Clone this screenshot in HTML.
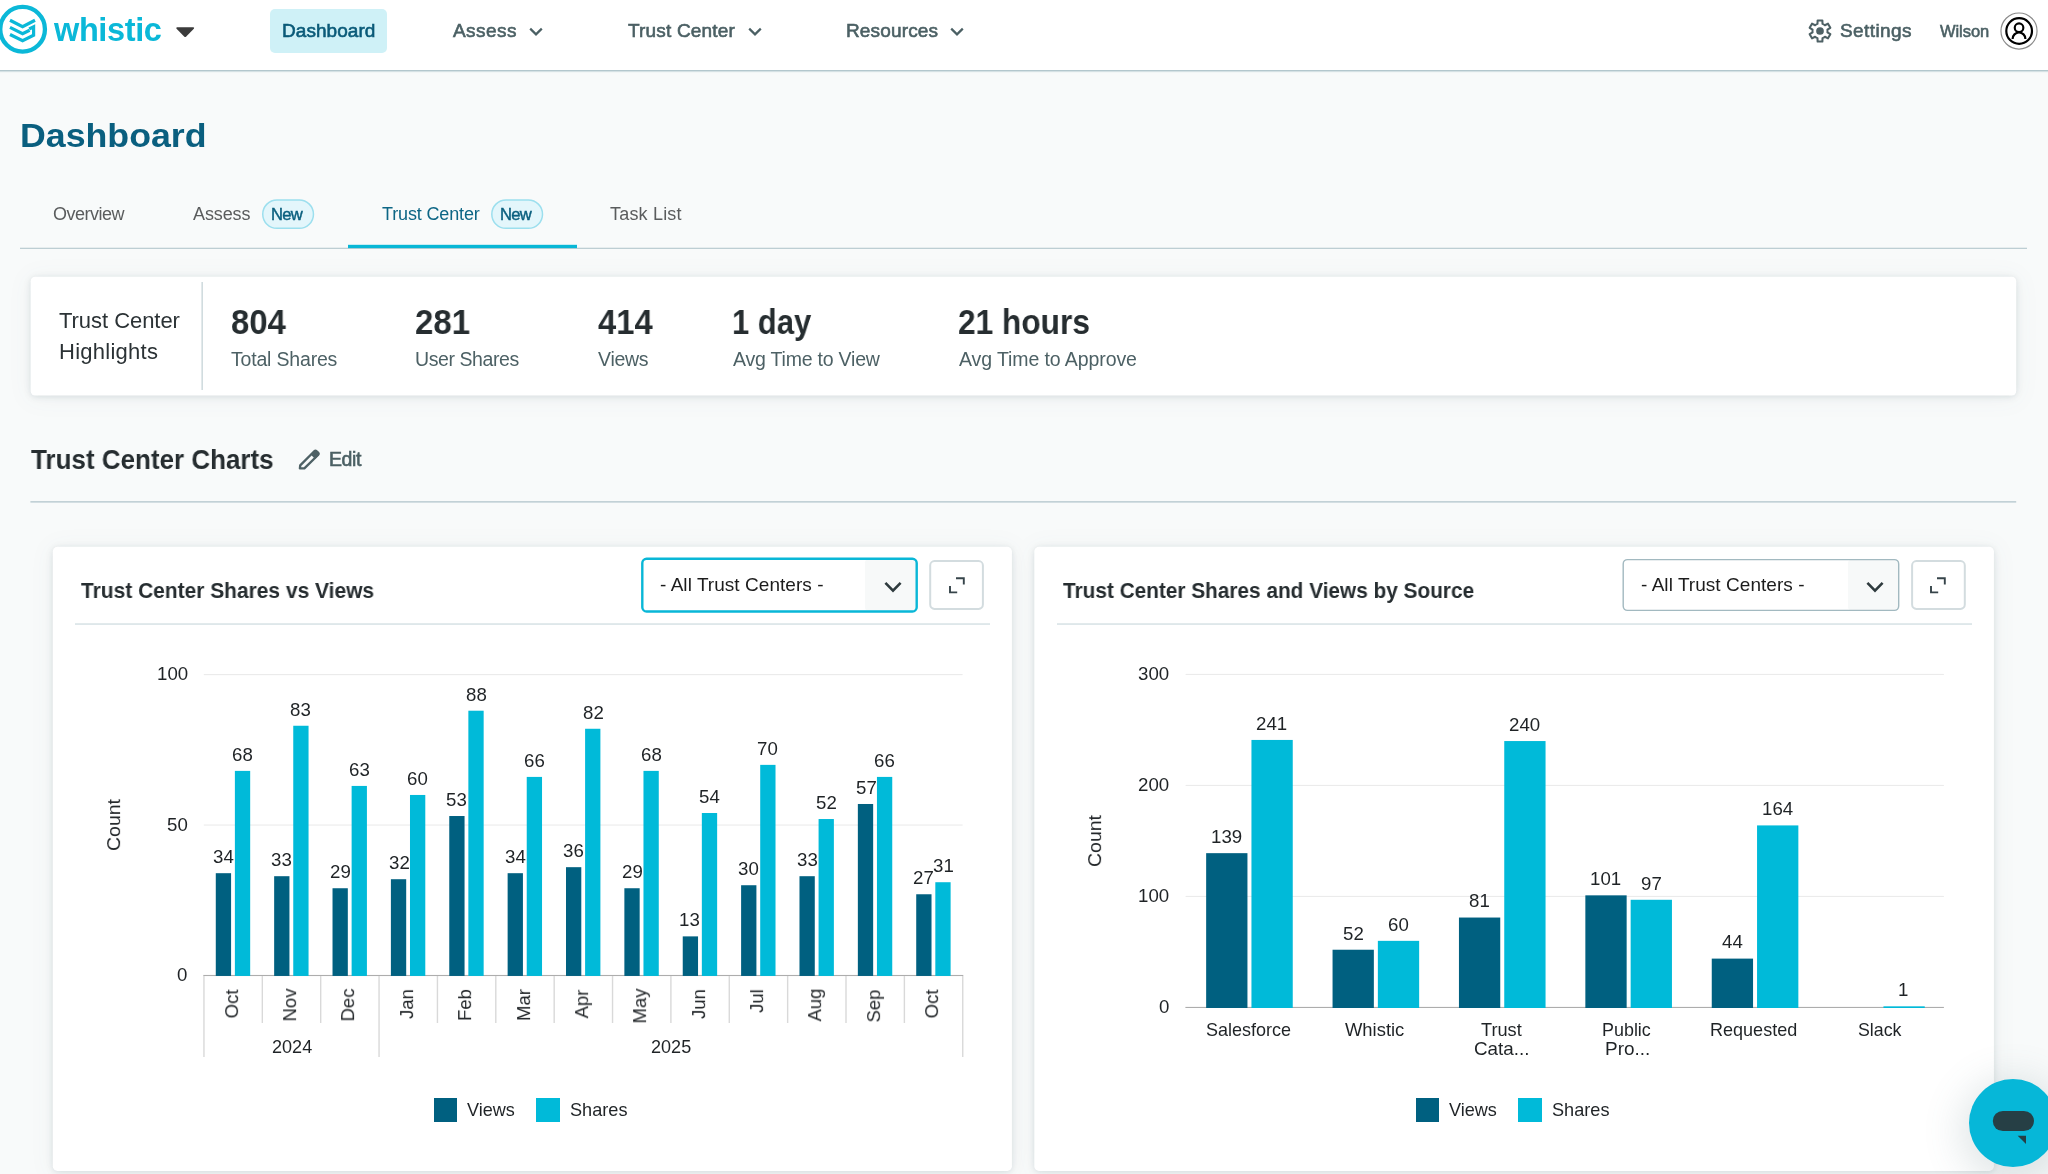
<!DOCTYPE html>
<html lang="en"><head><meta charset="utf-8"><title>Dashboard - Whistic</title>
<style>
*{box-sizing:border-box;margin:0;padding:0}
html,body{width:2048px;height:1174px;overflow:hidden}
body{position:relative;background:#f8fafa;font-family:"Liberation Sans",sans-serif;color:#262d30;
  -webkit-font-smoothing:antialiased}
.t{position:absolute;white-space:nowrap;line-height:1;font-kerning:normal;display:block;will-change:transform}
h1.t,h2.t,h3.t{font-weight:700}
.abs{position:absolute}
svg{position:absolute;overflow:visible}
header{position:absolute;left:0;top:0;width:2048px;height:71px;background:#fff;border-bottom:1px solid #b3c7cd;box-shadow:0 1px 1px rgba(170,195,202,.45)}
.pill{position:absolute;left:270.2px;top:9px;width:116.8px;height:44.2px;border-radius:5px;background:#cff1f7}
.chat{position:absolute;left:1969px;top:1079px;width:88px;height:88px;border-radius:50%;background:#06b7d8;
  box-shadow:0 8px 36px 10px rgba(90,120,125,.17)}
</style></head>
<body>
<header>
<svg width="50" height="58" viewBox="0 0 50 58" style="left:0;top:0">
<circle cx="22.6" cy="29.3" r="22.35" fill="none" stroke="#0bb8d8" stroke-width="4.3"/>
<g fill="none" stroke="#0bb8d8" stroke-width="3.2" stroke-linejoin="miter" stroke-linecap="butt">
<path d="M10 20.3 L22.6 26.6 L35 20.3"/>
<path d="M10 27.4 L22.6 33.7 L29.6 30.2"/>
<path d="M10 34.5 L22.6 40.8 L33.6 35.3 L33.6 26.8 L29.2 29"/>
</g></svg>
<span class="t" style="left:54.40px;top:14.00px;font-size:32.5px;font-weight:700;color:#0bb8d8;letter-spacing:-0.381px">whistic</span>
<svg width="20.8" height="12.5" viewBox="0 0 20 12" style="left:175.4px;top:25.9px"><path d="M2 1.2 H17.6 Q19 1.5 18.1 2.7 L10.6 10.3 Q9.8 10.9 9 10.3 L1.5 2.7 Q0.6 1.5 2 1.2 Z" fill="#3b3b3b"/></svg>
<nav>
<div class="pill"></div>
<a class="t" style="left:281.80px;top:21.00px;font-size:19px;color:#0a5a78;letter-spacing:0.052px;-webkit-text-stroke:0.6px #0a5a78">Dashboard</a>
<a class="t" style="left:453.00px;top:21.00px;font-size:19px;color:#4b6064;letter-spacing:0.452px;-webkit-text-stroke:0.6px #4b6064">Assess</a>
<svg width="16" height="12" viewBox="0 0 16 12" style="left:528px;top:25.5px"><path d="M2.2 2.6 L8 8.4 L13.8 2.6" fill="none" stroke="#4b6064" stroke-width="2.2"/></svg>
<a class="t" style="left:627.50px;top:21.00px;font-size:19px;color:#4b6064;letter-spacing:0.177px;-webkit-text-stroke:0.6px #4b6064">Trust Center</a>
<svg width="16" height="12" viewBox="0 0 16 12" style="left:746.5px;top:25.5px"><path d="M2.2 2.6 L8 8.4 L13.8 2.6" fill="none" stroke="#4b6064" stroke-width="2.2"/></svg>
<a class="t" style="left:845.50px;top:21.00px;font-size:19px;color:#4b6064;letter-spacing:0.148px;-webkit-text-stroke:0.6px #4b6064">Resources</a>
<svg width="16" height="12" viewBox="0 0 16 12" style="left:948.5px;top:25.5px"><path d="M2.2 2.6 L8 8.4 L13.8 2.6" fill="none" stroke="#4b6064" stroke-width="2.2"/></svg>
</nav>
<svg width="24" height="24" viewBox="0 0 24 24" style="left:1808.1px;top:19px"><path d="M9.48 4.88 L9.63 1.41 L14.37 1.41 L14.52 4.88 A7.55 7.55 0 0 1 16.90 6.26 L19.99 4.66 L22.35 8.76 L19.42 10.62 A7.55 7.55 0 0 1 19.42 13.38 L22.35 15.24 L19.99 19.34 L16.90 17.74 A7.55 7.55 0 0 1 14.52 19.12 L14.37 22.59 L9.63 22.59 L9.48 19.12 A7.55 7.55 0 0 1 7.10 17.74 L4.01 19.34 L1.65 15.24 L4.58 13.38 A7.55 7.55 0 0 1 4.58 10.62 L1.65 8.76 L4.01 4.66 L7.10 6.26 A7.55 7.55 0 0 1 9.48 4.88 Z" fill="none" stroke="#4e6165" stroke-width="2.05" stroke-linejoin="round"/><circle cx="12" cy="12" r="3.85" fill="#4e6165"/></svg>
<a class="t" style="left:1839.90px;top:21.00px;font-size:19px;color:#4b6064;letter-spacing:0.421px;-webkit-text-stroke:0.6px #4b6064">Settings</a>
<span class="t" style="left:1940.00px;top:23.00px;font-size:16.5px;color:#4b6064;letter-spacing:-0.066px;-webkit-text-stroke:0.55px #4b6064">Wilson</span>
<svg width="40" height="40" viewBox="0 0 40 40" style="left:1999.1px;top:10.9px">
<circle cx="20" cy="20" r="18.05" fill="#fff" stroke="#8b8b8b" stroke-width="1.15"/>
<circle cx="20.15" cy="20" r="12.85" fill="none" stroke="#000" stroke-width="2.2"/>
<circle cx="20.05" cy="16.7" r="4.3" fill="none" stroke="#000" stroke-width="2.15"/>
<path d="M13.6 27.9 A6.4 6.4 0 0 1 26.4 27.9" fill="none" stroke="#000" stroke-width="2.15"/>
</svg>
</header>
<main>
<svg class="bg" width="2048" height="1174" viewBox="0 0 2048 1174" style="left:0;top:0"><rect x="20" y="247.75" width="2007" height="1.1" fill="#b3c6cc"/><rect x="348" y="244.8" width="229" height="3.3" fill="#08b7d6"/><rect x="262.75" y="199.95" width="50.7" height="28.4" rx="14.2" fill="#e3f6fb" stroke="#9cdfee" stroke-width="1.5"/><rect x="491.81" y="199.95" width="50.7" height="28.4" rx="14.2" fill="#e3f6fb" stroke="#9cdfee" stroke-width="1.5"/><rect x="30.7" y="276.8" width="1985.5" height="118.8" rx="4.5" fill="#fff" style="filter:drop-shadow(0 1px 3px rgba(45,75,85,.14)) drop-shadow(0 2px 11px rgba(45,75,85,.06))"/><rect x="201.5" y="282" width="1.3" height="108" fill="#c6d4d8"/><rect x="30.4" y="501.2" width="1985.8" height="1.35" fill="#b5c8ce"/><rect x="52.8" y="546.8" width="959.1" height="624.2" rx="4.8" fill="#fff" style="filter:drop-shadow(0 1px 3px rgba(45,75,85,.14)) drop-shadow(0 2px 11px rgba(45,75,85,.06))"/><rect x="1034.3" y="546.8" width="959.6" height="624.2" rx="4.8" fill="#fff" style="filter:drop-shadow(0 1px 3px rgba(45,75,85,.14)) drop-shadow(0 2px 11px rgba(45,75,85,.06))"/><rect x="75" y="623.2" width="915" height="1.7" fill="#dbe5e8"/><rect x="1057" y="623.2" width="915" height="1.7" fill="#dbe5e8"/><rect x="865" y="559.5" width="51.5" height="51" rx="3" fill="#f7f9f9"/><rect x="642.3" y="558.8" width="274.4" height="52.7" rx="4.3" fill="none" stroke="#09b7d7" stroke-width="2.4"/><rect x="1848" y="560" width="50.5" height="50" rx="3" fill="#f7f9f9"/><rect x="1623.2" y="559.6" width="275.5" height="50.8" rx="4.3" fill="none" stroke="#a2b9c0" stroke-width="1.4"/><rect x="930.2" y="561.1" width="52.7" height="47.8" rx="4.3" fill="#fff" stroke="#d3dcdf" stroke-width="2"/><rect x="1912.1" y="561.1" width="52.7" height="47.8" rx="4.3" fill="#fff" stroke="#d3dcdf" stroke-width="2"/></svg>
<h1 class="t" style="left:20.07px;top:119.00px;transform:scaleX(1.0664);transform-origin:0 0;font-size:33.5px;font-weight:700;color:#0a5f7f">Dashboard</h1>
<div class="tabs">
<a class="t" style="left:53.00px;top:205.00px;font-size:18px;color:#5a5c5d;letter-spacing:-0.502px">Overview</a>
<a class="t" style="left:193.00px;top:205.00px;font-size:18px;color:#5a5c5d;letter-spacing:-0.103px">Assess</a>
<span class="t" style="left:271.00px;top:207.00px;font-size:16.6px;color:#0a5f7e;letter-spacing:-0.706px;-webkit-text-stroke:0.45px #0a5f7e">New</span>
<a class="t" style="left:381.50px;top:205.00px;font-size:18px;color:#0d6685;letter-spacing:-0.142px">Trust Center</a>
<span class="t" style="left:500.00px;top:207.00px;font-size:16.6px;color:#0a5f7e;letter-spacing:-0.706px;-webkit-text-stroke:0.45px #0a5f7e">New</span>
<a class="t" style="left:610.00px;top:205.00px;font-size:18px;color:#5a5c5d;letter-spacing:0.185px">Task List</a>
</div>
<section class="highlights">
<span class="t" style="left:58.60px;top:310.00px;font-size:22px;color:#2b3235;letter-spacing:-0.047px">Trust Center</span>
<span class="t" style="left:58.50px;top:341.00px;font-size:22px;color:#2b3235;letter-spacing:0.255px">Highlights</span>
<span class="t" style="left:230.95px;top:305.00px;transform:scaleX(0.9502);transform-origin:0 0;font-size:34.6px;font-weight:700;color:#262d30">804</span>
<span class="t" style="left:231.20px;top:350.00px;font-size:19.5px;color:#4d6165;letter-spacing:-0.186px">Total Shares</span>
<span class="t" style="left:415.45px;top:305.00px;transform:scaleX(0.9546);transform-origin:0 0;font-size:34.6px;font-weight:700;color:#262d30">281</span>
<span class="t" style="left:414.70px;top:350.00px;font-size:19.5px;color:#4d6165;letter-spacing:-0.412px">User Shares</span>
<span class="t" style="left:598.40px;top:305.00px;transform:scaleX(0.9476);transform-origin:0 0;font-size:34.6px;font-weight:700;color:#262d30">414</span>
<span class="t" style="left:597.70px;top:350.00px;font-size:19.5px;color:#4d6165;letter-spacing:-0.278px">Views</span>
<span class="t" style="left:732.11px;top:305.00px;transform:scaleX(0.8957);transform-origin:0 0;font-size:34.6px;font-weight:700;color:#262d30">1 day</span>
<span class="t" style="left:733.20px;top:350.00px;font-size:19.5px;color:#4d6165;letter-spacing:-0.200px">Avg Time to View</span>
<span class="t" style="left:958.49px;top:305.00px;transform:scaleX(0.9148);transform-origin:0 0;font-size:34.6px;font-weight:700;color:#262d30">21 hours</span>
<span class="t" style="left:958.70px;top:350.00px;font-size:19.5px;color:#4d6165;letter-spacing:-0.092px">Avg Time to Approve</span>
</section>
<div class="section-head">
<h2 class="t" style="left:30.90px;top:446.00px;transform:scaleX(0.9282);transform-origin:0 0;font-size:28px;font-weight:700;color:#262d30">Trust Center Charts</h2>
<svg width="25.3" height="25.3" viewBox="0 0 24 24" style="left:297.1px;top:446.1px">
<path d="M2.75 21.3 L3.05 18.35 L16.4 5 Q17.5 3.9 18.6 5 L19.95 6.35 Q21.05 7.45 19.95 8.55 L7 21.3 Z" fill="none" stroke="#4e6165" stroke-width="2.2" stroke-linejoin="round"/>
<path d="M13.6 7.8 L16.4 5 Q17.5 3.9 18.6 5 L19.95 6.35 Q21.05 7.45 19.95 8.55 L17.15 11.35 Z" fill="#4e6165" stroke="#4e6165" stroke-width="1.2" stroke-linejoin="round"/>
</svg>
<a class="t" style="left:329.20px;top:450.00px;font-size:19.5px;color:#4b6064;letter-spacing:-0.428px;-webkit-text-stroke:0.6px #4b6064">Edit</a>
</div>
<section class="chart-card">
<h3 class="t" style="left:80.50px;top:580.00px;transform:scaleX(0.9522);transform-origin:0 0;font-size:22px;font-weight:700;color:#262d30">Trust Center Shares vs Views</h3>
<span class="t" style="left:660.00px;top:575.00px;font-size:19px;color:#1c1c1c;letter-spacing:0.047px">- All Trust Centers -</span>
<svg width="20" height="14" viewBox="0 0 20 14" style="left:883.2px;top:580px"><path d="M2.4 2.8 L10 10.6 L17.6 2.8" fill="none" stroke="#2f3b3e" stroke-width="2.6"/></svg>
<svg width="20" height="20" viewBox="0 0 20 20" style="left:946.5px;top:575px"><path d="M9 3.3 H16.8 V9.6 M3 11 V17.4 H10.2" fill="none" stroke="#36444a" stroke-width="1.9"/></svg>
<svg width="2048" height="1174" viewBox="0 0 2048 1174" style="left:0;top:0" shape-rendering="auto"><rect x="203.8" y="824.50" width="758.8" height="1.1" fill="#ebebeb"/><rect x="203.8" y="674.05" width="758.8" height="1.1" fill="#ebebeb"/><rect x="203.3" y="974.95" width="760" height="1.1" fill="#adadad"/><rect x="203.25" y="976.00" width="1.4" height="81" fill="#d9d9d9"/><rect x="261.62" y="976.00" width="1.4" height="47" fill="#d9d9d9"/><rect x="319.99" y="976.00" width="1.4" height="47" fill="#d9d9d9"/><rect x="378.36" y="976.00" width="1.4" height="81" fill="#d9d9d9"/><rect x="436.73" y="976.00" width="1.4" height="47" fill="#d9d9d9"/><rect x="495.10" y="976.00" width="1.4" height="47" fill="#d9d9d9"/><rect x="553.47" y="976.00" width="1.4" height="47" fill="#d9d9d9"/><rect x="611.83" y="976.00" width="1.4" height="47" fill="#d9d9d9"/><rect x="670.20" y="976.00" width="1.4" height="47" fill="#d9d9d9"/><rect x="728.57" y="976.00" width="1.4" height="47" fill="#d9d9d9"/><rect x="786.94" y="976.00" width="1.4" height="47" fill="#d9d9d9"/><rect x="845.31" y="976.00" width="1.4" height="47" fill="#d9d9d9"/><rect x="903.68" y="976.00" width="1.4" height="47" fill="#d9d9d9"/><rect x="962.05" y="976.00" width="1.4" height="81" fill="#d9d9d9"/><rect x="215.78" y="873.19" width="15.3" height="102.76" fill="#006080"/><rect x="234.88" y="770.89" width="15.3" height="205.06" fill="#00bad9"/><rect x="274.15" y="876.20" width="15.3" height="99.75" fill="#006080"/><rect x="293.25" y="725.75" width="15.3" height="250.20" fill="#00bad9"/><rect x="332.52" y="888.24" width="15.3" height="87.71" fill="#006080"/><rect x="351.62" y="785.93" width="15.3" height="190.02" fill="#00bad9"/><rect x="390.89" y="879.21" width="15.3" height="96.74" fill="#006080"/><rect x="409.99" y="794.96" width="15.3" height="180.99" fill="#00bad9"/><rect x="449.26" y="816.02" width="15.3" height="159.93" fill="#006080"/><rect x="468.36" y="710.71" width="15.3" height="265.24" fill="#00bad9"/><rect x="507.63" y="873.19" width="15.3" height="102.76" fill="#006080"/><rect x="526.73" y="776.91" width="15.3" height="199.04" fill="#00bad9"/><rect x="566.00" y="867.18" width="15.3" height="108.77" fill="#006080"/><rect x="585.10" y="728.76" width="15.3" height="247.19" fill="#00bad9"/><rect x="624.37" y="888.24" width="15.3" height="87.71" fill="#006080"/><rect x="643.47" y="770.89" width="15.3" height="205.06" fill="#00bad9"/><rect x="682.74" y="936.38" width="15.3" height="39.57" fill="#006080"/><rect x="701.84" y="813.01" width="15.3" height="162.94" fill="#00bad9"/><rect x="741.11" y="885.23" width="15.3" height="90.72" fill="#006080"/><rect x="760.21" y="764.87" width="15.3" height="211.08" fill="#00bad9"/><rect x="799.48" y="876.20" width="15.3" height="99.75" fill="#006080"/><rect x="818.58" y="819.03" width="15.3" height="156.92" fill="#00bad9"/><rect x="857.85" y="803.99" width="15.3" height="171.96" fill="#006080"/><rect x="876.95" y="776.91" width="15.3" height="199.04" fill="#00bad9"/><rect x="916.22" y="894.26" width="15.3" height="81.69" fill="#006080"/><rect x="935.32" y="882.22" width="15.3" height="93.73" fill="#00bad9"/></svg>
<span class="t" style="left:177.30px;top:967.00px;transform:scaleX(1.0500);transform-origin:0 0;font-size:17.8px;color:#1f2326">0</span>
<span class="t" style="left:166.92px;top:817.00px;transform:scaleX(1.0500);transform-origin:0 0;font-size:17.8px;color:#1f2326">50</span>
<span class="t" style="left:156.53px;top:666.00px;transform:scaleX(1.0500);transform-origin:0 0;font-size:17.8px;color:#1f2326">100</span>
<span class="t" style="left:115.00px;top:825.20px;transform:translate(-50%,-50%) rotate(-90deg) scaleX(1.0945);font-size:17.8px;color:#1f2326">Count</span>
<span class="t" style="left:232.68px;top:1003.72px;transform:translate(-50%,-50%) rotate(-90deg) scaleX(1.0400);font-size:17.8px;color:#1f2326">Oct</span>
<span class="t" style="left:212.99px;top:849.00px;transform:scaleX(1.0500);transform-origin:0 0;font-size:17.8px;color:#1f2326">34</span>
<span class="t" style="left:232.09px;top:747.00px;transform:scaleX(1.0500);transform-origin:0 0;font-size:17.8px;color:#1f2326">68</span>
<span class="t" style="left:291.05px;top:1005.28px;transform:translate(-50%,-50%) rotate(-90deg) scaleX(1.0400);font-size:17.8px;color:#1f2326">Nov</span>
<span class="t" style="left:271.36px;top:852.00px;transform:scaleX(1.0500);transform-origin:0 0;font-size:17.8px;color:#1f2326">33</span>
<span class="t" style="left:290.46px;top:702.00px;transform:scaleX(1.0500);transform-origin:0 0;font-size:17.8px;color:#1f2326">83</span>
<span class="t" style="left:349.42px;top:1005.28px;transform:translate(-50%,-50%) rotate(-90deg) scaleX(1.0400);font-size:17.8px;color:#1f2326">Dec</span>
<span class="t" style="left:329.73px;top:864.00px;transform:scaleX(1.0500);transform-origin:0 0;font-size:17.8px;color:#1f2326">29</span>
<span class="t" style="left:348.83px;top:762.00px;transform:scaleX(1.0500);transform-origin:0 0;font-size:17.8px;color:#1f2326">63</span>
<span class="t" style="left:407.79px;top:1003.75px;transform:translate(-50%,-50%) rotate(-90deg) scaleX(1.0400);font-size:17.8px;color:#1f2326">Jan</span>
<span class="t" style="left:388.63px;top:855.00px;transform:scaleX(1.0500);transform-origin:0 0;font-size:17.8px;color:#1f2326">32</span>
<span class="t" style="left:407.20px;top:771.00px;transform:scaleX(1.0500);transform-origin:0 0;font-size:17.8px;color:#1f2326">60</span>
<span class="t" style="left:466.16px;top:1004.77px;transform:translate(-50%,-50%) rotate(-90deg) scaleX(1.0400);font-size:17.8px;color:#1f2326">Feb</span>
<span class="t" style="left:446.47px;top:792.00px;transform:scaleX(1.0500);transform-origin:0 0;font-size:17.8px;color:#1f2326">53</span>
<span class="t" style="left:465.57px;top:687.00px;transform:scaleX(1.0500);transform-origin:0 0;font-size:17.8px;color:#1f2326">88</span>
<span class="t" style="left:524.53px;top:1004.74px;transform:translate(-50%,-50%) rotate(-90deg) scaleX(1.0400);font-size:17.8px;color:#1f2326">Mar</span>
<span class="t" style="left:504.84px;top:849.00px;transform:scaleX(1.0500);transform-origin:0 0;font-size:17.8px;color:#1f2326">34</span>
<span class="t" style="left:523.94px;top:753.00px;transform:scaleX(1.0500);transform-origin:0 0;font-size:17.8px;color:#1f2326">66</span>
<span class="t" style="left:582.90px;top:1003.73px;transform:translate(-50%,-50%) rotate(-90deg) scaleX(1.0400);font-size:17.8px;color:#1f2326">Apr</span>
<span class="t" style="left:563.21px;top:843.00px;transform:scaleX(1.0500);transform-origin:0 0;font-size:17.8px;color:#1f2326">36</span>
<span class="t" style="left:582.83px;top:705.00px;transform:scaleX(1.0500);transform-origin:0 0;font-size:17.8px;color:#1f2326">82</span>
<span class="t" style="left:641.27px;top:1006.30px;transform:translate(-50%,-50%) rotate(-90deg) scaleX(1.0400);font-size:17.8px;color:#1f2326">May</span>
<span class="t" style="left:621.58px;top:864.00px;transform:scaleX(1.0500);transform-origin:0 0;font-size:17.8px;color:#1f2326">29</span>
<span class="t" style="left:640.68px;top:747.00px;transform:scaleX(1.0500);transform-origin:0 0;font-size:17.8px;color:#1f2326">68</span>
<span class="t" style="left:699.64px;top:1003.75px;transform:translate(-50%,-50%) rotate(-90deg) scaleX(1.0400);font-size:17.8px;color:#1f2326">Jun</span>
<span class="t" style="left:679.42px;top:912.00px;transform:scaleX(1.0500);transform-origin:0 0;font-size:17.8px;color:#1f2326">13</span>
<span class="t" style="left:699.05px;top:789.00px;transform:scaleX(1.0500);transform-origin:0 0;font-size:17.8px;color:#1f2326">54</span>
<span class="t" style="left:758.01px;top:1000.63px;transform:translate(-50%,-50%) rotate(-90deg) scaleX(1.0400);font-size:17.8px;color:#1f2326">Jul</span>
<span class="t" style="left:738.32px;top:861.00px;transform:scaleX(1.0500);transform-origin:0 0;font-size:17.8px;color:#1f2326">30</span>
<span class="t" style="left:757.42px;top:741.00px;transform:scaleX(1.0500);transform-origin:0 0;font-size:17.8px;color:#1f2326">70</span>
<span class="t" style="left:816.38px;top:1005.29px;transform:translate(-50%,-50%) rotate(-90deg) scaleX(1.0400);font-size:17.8px;color:#1f2326">Aug</span>
<span class="t" style="left:796.69px;top:852.00px;transform:scaleX(1.0500);transform-origin:0 0;font-size:17.8px;color:#1f2326">33</span>
<span class="t" style="left:816.31px;top:795.00px;transform:scaleX(1.0500);transform-origin:0 0;font-size:17.8px;color:#1f2326">52</span>
<span class="t" style="left:874.75px;top:1005.81px;transform:translate(-50%,-50%) rotate(-90deg) scaleX(1.0400);font-size:17.8px;color:#1f2326">Sep</span>
<span class="t" style="left:855.58px;top:780.00px;transform:scaleX(1.0500);transform-origin:0 0;font-size:17.8px;color:#1f2326">57</span>
<span class="t" style="left:874.15px;top:753.00px;transform:scaleX(1.0500);transform-origin:0 0;font-size:17.8px;color:#1f2326">66</span>
<span class="t" style="left:933.12px;top:1003.72px;transform:translate(-50%,-50%) rotate(-90deg) scaleX(1.0400);font-size:17.8px;color:#1f2326">Oct</span>
<span class="t" style="left:913.35px;top:870.00px;transform:scaleX(1.0500);transform-origin:0 0;font-size:17.8px;color:#1f2326">27</span>
<span class="t" style="left:932.52px;top:858.00px;transform:scaleX(1.0500);transform-origin:0 0;font-size:17.8px;color:#1f2326">31</span>
<span class="t" style="left:271.50px;top:1039.00px;transform:scaleX(1.0160);transform-origin:0 0;font-size:17.8px;color:#1f2326">2024</span>
<span class="t" style="left:650.90px;top:1039.00px;transform:scaleX(1.0160);transform-origin:0 0;font-size:17.8px;color:#1f2326">2025</span>
<div class="abs" style="left:434px;top:1098.3px;width:23.2px;height:23.3px;background:#006080"></div>
<span class="t" style="left:467.40px;top:1102.00px;transform:scaleX(1.0165);transform-origin:0 0;font-size:17.8px;color:#1f2326">Views</span>
<div class="abs" style="left:536.2px;top:1098.3px;width:23.5px;height:23.3px;background:#00bad9"></div>
<span class="t" style="left:569.90px;top:1102.00px;transform:scaleX(1.0204);transform-origin:0 0;font-size:17.8px;color:#1f2326">Shares</span>
</section>
<section class="chart-card">
<h3 class="t" style="left:1063.00px;top:580.00px;transform:scaleX(0.9452);transform-origin:0 0;font-size:22px;font-weight:700;color:#262d30">Trust Center Shares and Views by Source</h3>
<span class="t" style="left:1641.30px;top:575.00px;font-size:19px;color:#1c1c1c;letter-spacing:0.047px">- All Trust Centers -</span>
<svg width="20" height="14" viewBox="0 0 20 14" style="left:1864.5px;top:580px"><path d="M2.4 2.8 L10 10.6 L17.6 2.8" fill="none" stroke="#2f3b3e" stroke-width="2.6"/></svg>
<svg width="20" height="20" viewBox="0 0 20 20" style="left:1928.4px;top:575px"><path d="M9 3.3 H16.8 V9.6 M3 11 V17.4 H10.2" fill="none" stroke="#36444a" stroke-width="1.9"/></svg>
<svg width="2048" height="1174" viewBox="0 0 2048 1174" style="left:0;top:0"><rect x="1185.6" y="895.90" width="758.3" height="1.1" fill="#ebebeb"/><rect x="1185.6" y="784.90" width="758.3" height="1.1" fill="#ebebeb"/><rect x="1185.6" y="673.90" width="758.3" height="1.1" fill="#ebebeb"/><rect x="1185.4" y="1006.90" width="758.5" height="1.1" fill="#adadad"/><rect x="1206.15" y="853.16" width="41.3" height="154.84" fill="#006080"/><rect x="1251.45" y="739.94" width="41.3" height="268.06" fill="#00bad9"/><rect x="1332.55" y="949.73" width="41.3" height="58.27" fill="#006080"/><rect x="1377.85" y="940.85" width="41.3" height="67.15" fill="#00bad9"/><rect x="1458.95" y="917.54" width="41.3" height="90.46" fill="#006080"/><rect x="1504.25" y="741.05" width="41.3" height="266.95" fill="#00bad9"/><rect x="1585.35" y="895.34" width="41.3" height="112.66" fill="#006080"/><rect x="1630.65" y="899.78" width="41.3" height="108.22" fill="#00bad9"/><rect x="1711.75" y="958.61" width="41.3" height="49.39" fill="#006080"/><rect x="1757.05" y="825.41" width="41.3" height="182.59" fill="#00bad9"/><rect x="1883.45" y="1006.34" width="41.3" height="1.66" fill="#00bad9"/></svg>
<span class="t" style="left:1159.20px;top:999.00px;transform:scaleX(1.0500);transform-origin:0 0;font-size:17.8px;color:#1f2326">0</span>
<span class="t" style="left:1138.43px;top:888.00px;transform:scaleX(1.0500);transform-origin:0 0;font-size:17.8px;color:#1f2326">100</span>
<span class="t" style="left:1138.43px;top:777.00px;transform:scaleX(1.0500);transform-origin:0 0;font-size:17.8px;color:#1f2326">200</span>
<span class="t" style="left:1138.43px;top:666.00px;transform:scaleX(1.0500);transform-origin:0 0;font-size:17.8px;color:#1f2326">300</span>
<span class="t" style="left:1095.60px;top:841.00px;transform:translate(-50%,-50%) rotate(-90deg) scaleX(1.0945);font-size:17.8px;color:#1f2326">Count</span>
<span class="t" style="left:1205.55px;top:1022.00px;transform:scaleX(1.0128);transform-origin:0 0;font-size:17.8px;color:#1f2326">Salesforce</span>
<span class="t" style="left:1210.64px;top:829.00px;transform:scaleX(1.0500);transform-origin:0 0;font-size:17.8px;color:#1f2326">139</span>
<span class="t" style="left:1256.47px;top:716.00px;transform:scaleX(1.0500);transform-origin:0 0;font-size:17.8px;color:#1f2326">241</span>
<span class="t" style="left:1344.85px;top:1022.00px;transform:scaleX(1.0348);transform-origin:0 0;font-size:17.8px;color:#1f2326">Whistic</span>
<span class="t" style="left:1343.28px;top:926.00px;transform:scaleX(1.0500);transform-origin:0 0;font-size:17.8px;color:#1f2326">52</span>
<span class="t" style="left:1388.06px;top:917.00px;transform:scaleX(1.0500);transform-origin:0 0;font-size:17.8px;color:#1f2326">60</span>
<span class="t" style="left:1480.55px;top:1022.00px;transform:scaleX(1.0225);transform-origin:0 0;font-size:17.8px;color:#1f2326">Trust</span>
<span class="t" style="left:1473.70px;top:1041.00px;transform:scaleX(1.0595);transform-origin:0 0;font-size:17.8px;color:#1f2326">Cata...</span>
<span class="t" style="left:1469.16px;top:893.00px;transform:scaleX(1.0500);transform-origin:0 0;font-size:17.8px;color:#1f2326">81</span>
<span class="t" style="left:1509.27px;top:717.00px;transform:scaleX(1.0500);transform-origin:0 0;font-size:17.8px;color:#1f2326">240</span>
<span class="t" style="left:1602.39px;top:1022.00px;transform:scaleX(1.0076);transform-origin:0 0;font-size:17.8px;color:#1f2326">Public</span>
<span class="t" style="left:1604.68px;top:1041.00px;transform:scaleX(1.0653);transform-origin:0 0;font-size:17.8px;color:#1f2326">Pro...</span>
<span class="t" style="left:1589.84px;top:871.00px;transform:scaleX(1.0500);transform-origin:0 0;font-size:17.8px;color:#1f2326">101</span>
<span class="t" style="left:1641.38px;top:876.00px;transform:scaleX(1.0500);transform-origin:0 0;font-size:17.8px;color:#1f2326">97</span>
<span class="t" style="left:1710.09px;top:1022.00px;transform:scaleX(1.0141);transform-origin:0 0;font-size:17.8px;color:#1f2326">Requested</span>
<span class="t" style="left:1721.96px;top:934.00px;transform:scaleX(1.0500);transform-origin:0 0;font-size:17.8px;color:#1f2326">44</span>
<span class="t" style="left:1761.54px;top:801.00px;transform:scaleX(1.0500);transform-origin:0 0;font-size:17.8px;color:#1f2326">164</span>
<span class="t" style="left:1858.35px;top:1022.00px;transform:scaleX(1.0002);transform-origin:0 0;font-size:17.8px;color:#1f2326">Slack</span>
<span class="t" style="left:1898.33px;top:982.00px;transform:scaleX(1.0500);transform-origin:0 0;font-size:17.8px;color:#1f2326">1</span>
<div class="abs" style="left:1416px;top:1098.3px;width:23.2px;height:23.3px;background:#006080"></div>
<span class="t" style="left:1449.40px;top:1102.00px;transform:scaleX(1.0165);transform-origin:0 0;font-size:17.8px;color:#1f2326">Views</span>
<div class="abs" style="left:1518.2px;top:1098.3px;width:23.5px;height:23.3px;background:#00bad9"></div>
<span class="t" style="left:1551.90px;top:1102.00px;transform:scaleX(1.0204);transform-origin:0 0;font-size:17.8px;color:#1f2326">Shares</span>
</section>
</main>
<div class="chat"></div><svg width="60" height="50" viewBox="0 0 60 50" style="left:1985px;top:1100px"><rect x="7.8" y="10.9" width="41.2" height="20.2" rx="10.1" fill="#263f45"/><path d="M32.7 35.8 H41 V44.1 Z" fill="#263f45"/></svg>
</body></html>
